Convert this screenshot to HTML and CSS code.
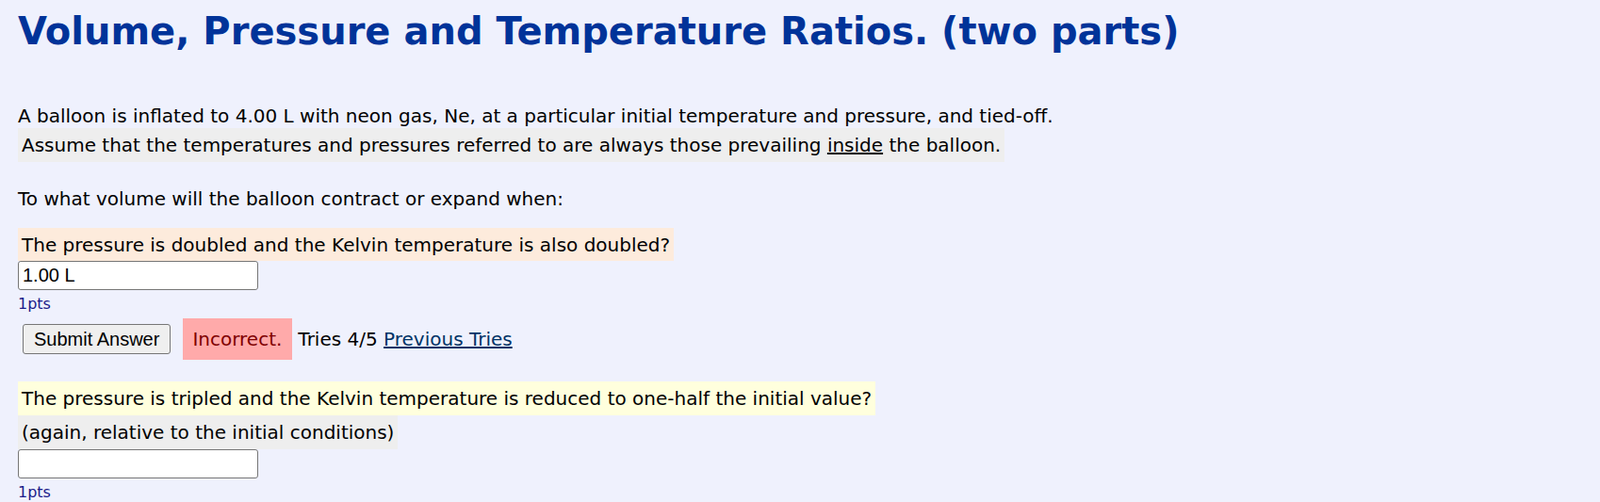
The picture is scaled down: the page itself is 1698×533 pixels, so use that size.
FILE: index.html
```html
<!DOCTYPE html>
<html lang="en">
<head>
    <meta charset="UTF-8">
    <meta name="viewport" content="width=device-width, initial-scale=1.0">
    <title>Volume, Pressure and Temperature Ratios</title>
    <link rel="stylesheet" href="styles.css">
</head>
<body>
    <div class="problem">
        <h1 class="title">Volume, Pressure and Temperature Ratios. (two parts)</h1>

        <div class="intro">
            <div class="line">A balloon is inflated to 4.00 L with neon gas, Ne, at a particular initial temperature and pressure, and tied-off.</div>
            <div><span class="note">Assume that the temperatures and pressures referred to are always those prevailing <u>inside</u> the balloon.</span></div>
        </div>

        <div class="ask">To what volume will the balloon contract or expand when:</div>

        <div class="part first">
            <div><span class="question peach">The pressure is doubled and the Kelvin temperature is also doubled?</span></div>
            <input class="answer" type="text" value="1.00 L">
            <div class="pts">1pts</div>
            <div class="submit-row">
                <button class="submit">Submit Answer</button>
                <span class="incorrect">Incorrect.</span>
                <span class="tries">Tries 4/5 <a href="#">Previous Tries</a></span>
            </div>
        </div>

        <div class="part second">
            <div><span class="question yellow">The pressure is tripled and the Kelvin temperature is reduced to one-half the initial value?</span></div>
            <div><span class="note">(again, relative to the initial conditions)</span></div>
            <input class="answer" type="text" value="">
            <div class="pts">1pts</div>
        </div>
    </div>
</body>
</html>
```

FILE: styles.css
```css
body {
    margin: 0;
    background: #eff1fd;
    color: #000;
    font-family: "DejaVu Sans", Verdana, sans-serif;
    font-size: 20px;
}

.problem {
    padding: 0 19px;
}

.title {
    margin: 10px 0 0 0;
    font-size: 40px;
    color: #003399;
}

.intro {
    margin-top: 55px;
}

.line {
    margin-bottom: 1px;
}

.note,
.question {
    display: inline-block;
    padding: 6px 4px 5.7px 4px;
}

.note {
    background: #eeeeee;
}

.question.peach {
    background: #fdebdc;
}

.question.yellow {
    background: #ffffdd;
}

.ask {
    margin-top: 27.7px;
}

.part.first {
    margin-top: 18.4px;
}

.part.second {
    margin-top: 23.3px;
}

.answer {
    display: block;
    box-sizing: border-box;
    width: 255px;
    height: 31px;
    margin: 0;
    padding: 1px 4px;
    border: 1px solid #767676;
    border-radius: 3px;
    background: #fff;
    font-family: "Liberation Sans", Arial, sans-serif;
    font-size: 20px;
}

.pts {
    margin-top: 5px;
    font-size: 16px;
    color: #1c1c8a;
}

.submit-row {
    display: flex;
    align-items: center;
    margin-top: 6px;
    padding-left: 5px;
}

.submit {
    height: 32px;
    padding: 0 11px;
    border: 1px solid #767676;
    border-radius: 3px;
    background: #efefef;
    font-family: "Liberation Sans", Arial, sans-serif;
    font-size: 20px;
    color: #000;
}

.incorrect {
    margin-left: 13px;
    padding: 9.7px 11px 9.7px 10px;
    background: #ffaaaa;
    color: #800000;
}

.tries {
    margin-left: 6px;
}

.tries a {
    color: #003366;
}
```
